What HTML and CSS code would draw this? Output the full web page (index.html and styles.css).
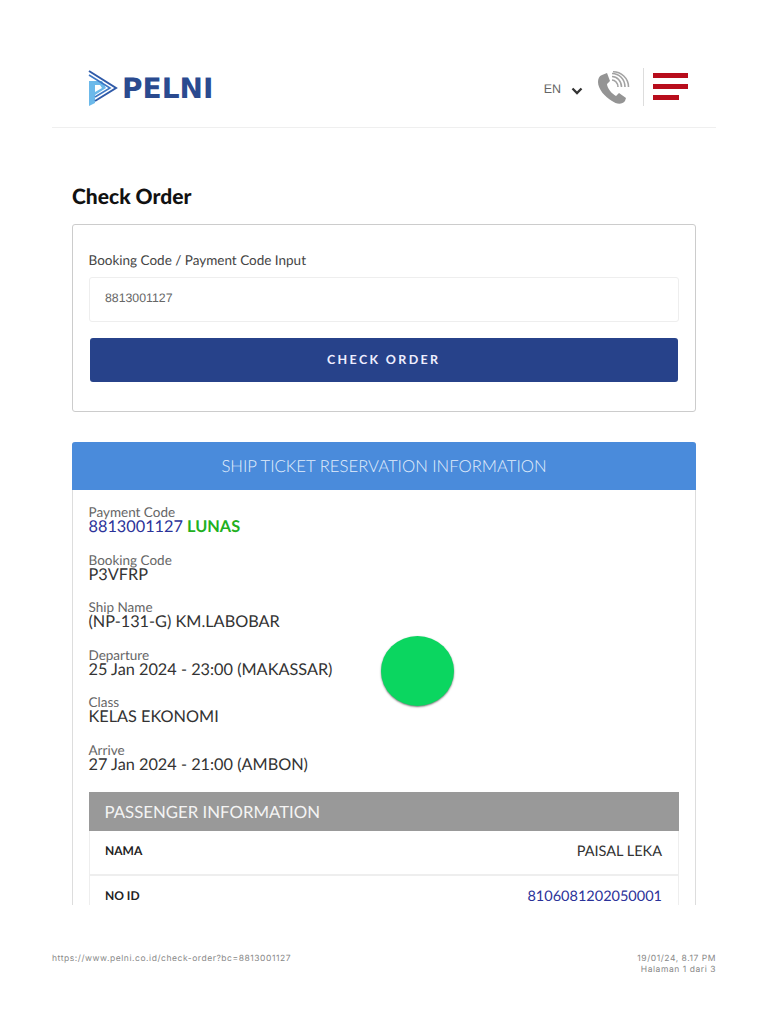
FILE: index.html
```html
<!DOCTYPE html>
<html lang="en">
<head>
	<meta charset="UTF-8">
	<title>Check Order</title>
	<link rel="stylesheet" href="styles.css">
</head>
<body>
	<div class="sheet">
		<div class="header">
			<div class="logo">
				<svg class="logo-mark" width="30" height="37" viewBox="0 0 30 37">
					<path d="M1 11 H14 L18 18 L7 25 V33 L1 36 Z" fill="#6cb9ea"/>
					<path d="M7 15 H12 L14 18 L7 22 Z" fill="#fff"/>
					<path d="M1 1 L28 18 L7 31" fill="none" stroke="#2f5aa8" stroke-width="2"/>
					<path d="M1 5 L22 18 L7 27" fill="none" stroke="#3f78c4" stroke-width="1.6"/>
				</svg>
				<span class="logo-text">PELNI</span>
			</div>
			<div class="header-right">
				<span class="lang">EN</span>
				<svg class="chevron" width="12" height="8" viewBox="0 0 12 8">
					<path d="M1.5 1.5 L6 6 L10.5 1.5" fill="none" stroke="#333" stroke-width="2.300"/>
				</svg>
				<svg class="phone" width="32" height="34" viewBox="0 0 32 34">
					<path d="M4 4 L9 2 L12 10 L9 13 C9 17 14 23 18 25 L21 22 L28 27 L27 30 C24 34 18 33 14 30 C7 26 0 18 0 11 C0 8 1 5 4 4 Z" fill="#949494"/>
					<g fill="none" stroke="#a3a3a3" stroke-width="1.6">
						<path d="M14 9 C17 9 20 12 20 16"/>
						<path d="M14 5.500 C19 5.500 23.500 10 23.500 16"/>
						<path d="M14 2.500 C21 2.500 27 8 27 16"/>
						<path d="M15 0.800 C23 0.800 30.500 7 30.500 16"/>
					</g>
				</svg>
				<div class="menu-box">
					<span class="bar"></span>
					<span class="bar"></span>
					<span class="bar bar-short"></span>
				</div>
			</div>
		</div>

		<div class="content">
			<h1 class="title">Check Order</h1>

			<div class="card">
				<p class="field-label">Booking Code / Payment Code Input</p>
				<div class="input">8813001127</div>
				<a href="#" class="btn">CHECK ORDER</a>
			</div>

			<div class="panel">
				<div class="panel-head">SHIP TICKET RESERVATION INFORMATION</div>
				<div class="panel-body">
					<div class="info">
						<span class="info-label">Payment Code</span>
						<span class="info-value"><span class="blue">8813001127</span> <b class="paid">LUNAS</b></span>
					</div>
					<div class="info">
						<span class="info-label">Booking Code</span>
						<span class="info-value">P3VFRP</span>
					</div>
					<div class="info">
						<span class="info-label">Ship Name</span>
						<span class="info-value">(NP-131-G) KM.LABOBAR</span>
					</div>
					<div class="info">
						<span class="info-label">Departure</span>
						<span class="info-value">25 Jan 2024 - 23:00 (MAKASSAR)</span>
					</div>
					<div class="info">
						<span class="info-label">Class</span>
						<span class="info-value">KELAS EKONOMI</span>
					</div>
					<div class="info">
						<span class="info-label">Arrive</span>
						<span class="info-value">27 Jan 2024 - 21:00 (AMBON)</span>
					</div>

					<div class="passenger">
						<div class="passenger-head">PASSENGER INFORMATION</div>
						<div class="row">
							<span class="row-key">NAMA</span>
							<span class="row-val">PAISAL LEKA</span>
						</div>
						<div class="row">
							<span class="row-key">NO ID</span>
							<span class="row-val blue">8106081202050001</span>
						</div>
					</div>
				</div>
			</div>
			<div class="dot"></div>
		</div>
	</div>

	<div class="print-foot">
		<span>https://www.pelni.co.id/check-order?bc=8813001127</span>
		<span class="print-right">19/01/24, 8.17 PM<br>Halaman 1 dari 3</span>
	</div>
</body>
</html>
```

FILE: styles.css
```css
body,h1,p{
	margin: 0;
	padding: 0;
}
body{
	background: #fff;
	font-family: "Lato", "Liberation Sans", sans-serif;
	color: #333;
	text-rendering: geometricPrecision;
}
a{
	text-decoration: none;
}
.sheet{
	height: 905px;
	margin: 0 52px;
	overflow: hidden;
}
.header{
	display: flex;
	justify-content: space-between;
	height: 127px;
	border-bottom: 1px solid #efefef;
}
.logo{
	display: flex;
	align-items: center;
	gap: 4px;
	margin: 70px 0 0 36px;
	height: 37px;
}
.logo-text{
	font-family: "DejaVu Sans", sans-serif;
	font-weight: bold;
	font-size: 28px;
	letter-spacing: 0;
	color: #2a4a8f;
}
.header-right{
	display: flex;
	align-items: flex-start;
	margin-right: 28px;
}
.lang{
	margin-top: 82px;
	font-family: "Liberation Sans", sans-serif;
	font-size: 12.500px;
	color: #666;
}
.chevron{
	margin: 87px 0 0 10px;
}
.phone{
	margin: 71px 0 0 15px;
}
.menu-box{
	display: flex;
	flex-direction: column;
	gap: 6px;
	height: 38px;
	margin: 68px 0 0 13px;
	padding: 5px 0 0 9px;
	border-left: 1px solid #ddd;
	box-sizing: border-box;
}
.bar{
	display: block;
	width: 35px;
	height: 5px;
	background: #b80d1c;
}
.bar-short{
	width: 26px;
}
.content{
	position: relative;
	padding: 0 20px;
}
.title{
	margin-top: 55px;
	font-size: 21px;
	line-height: 27px;
	font-weight: 900;
	color: #111;
}
.card{
	height: 188px;
	margin-top: 14px;
	padding: 16px 16px 16px 15.5px;
	border: 1px solid #ccc;
	border-radius: 3px;
	box-sizing: border-box;
}
.field-label{
	margin-top: 10px;
	font-size: 13.5px;
	line-height: 18px;
	color: #444;
}
.input{
	height: 45px;
	margin-top: 8px;
	padding-left: 15.5px;
	border: 1px solid #eee;
	border-radius: 3px;
	box-sizing: border-box;
	font-family: "Liberation Sans", sans-serif;
	font-size: 12.300px;
	line-height: 41px;
	color: #666;
}
.btn{
	display: block;
	height: 44px;
	margin: 16px 1px 0 1px;
	background: #27428a;
	border-radius: 3px;
	color: #eef;
	font-size: 12.500px;
	font-weight: bold;
	line-height: 44px;
	letter-spacing: 2.35px;
	text-align: center;
}
.panel{
	margin-top: 30px;
	border: 1px solid #ddd;
	border-top: 0;
	border-radius: 3px;
}
.panel-head{
	height: 48px;
	margin: 0 -1px;
	background: #4a8bdb;
	border-radius: 3px 3px 0 0;
	color: #e2eefb;
	font-size: 16.700px;
	font-weight: 300;
	line-height: 48px;
	text-align: center;
}
.panel-body{
	padding: 15px 16px 0 16px;
}
.info{
	display: flex;
	flex-direction: column;
	height: 47.6px;
	margin-left: -0.5px;
}
.info-label{
	font-size: 13.5px;
	line-height: 14px;
	color: #666;
}
.info-value{
	font-size: 16.300px;
	line-height: 16px;
	color: #333;
}
.blue{
	color: #2b3299;
}
.paid{
	color: #22b01e;
	font-weight: bold;
}
.passenger{
	margin-top: 1px;
}
.passenger-head{
	height: 39px;
	padding-left: 15.5px;
	background: #999;
	color: #f4f4f4;
	font-size: 16.800px;
	line-height: 39px;
}
.row{
	display: flex;
	justify-content: space-between;
	align-items: flex-start;
	height: 45px;
	padding: 12px 16px 0 15px;
	border: 1px solid #eee;
	border-top: 0;
	border-bottom-width: 2px;
	box-sizing: border-box;
}
.row-key{
	font-size: 12px;
	line-height: 16px;
	font-weight: bold;
	color: #222;
}
.row-val{
	font-size: 14.500px;
	line-height: 18px;
}
.dot{
	position: absolute;
	left: 329px;
	top: 453px;
	width: 73px;
	height: 70px;
	border-radius: 50%;
	background: #0bd660;
	box-shadow: 0 1px 2px #777;
}
.print-foot{
	display: flex;
	justify-content: space-between;
	margin: 49px 52px 0;
	font-family: "Inter", "Liberation Sans", sans-serif;
	font-size: 8.5px;
	line-height: 11px;
	letter-spacing: 0.55px;
	color: #888;
}
.print-right{
	text-align: right;
}
```
